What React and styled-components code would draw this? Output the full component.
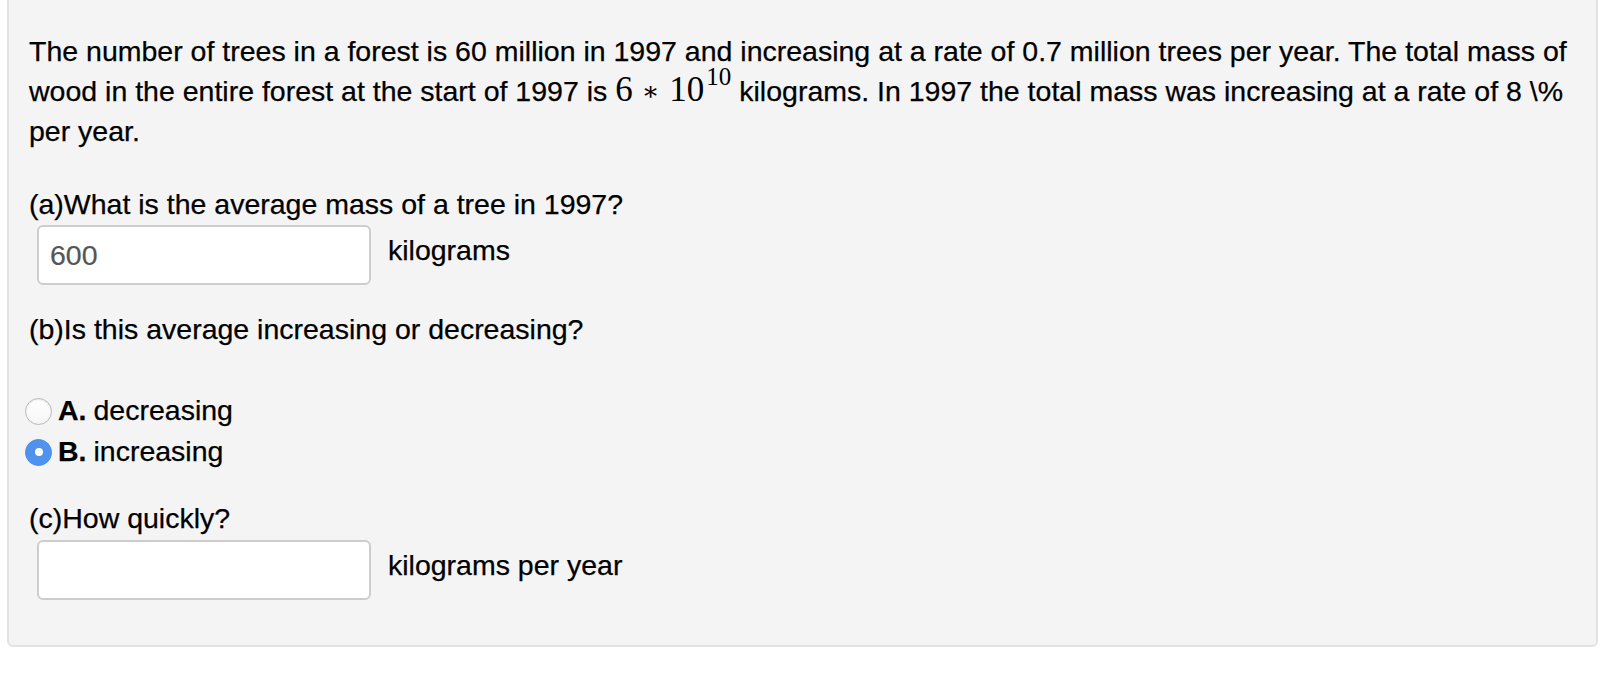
import React from 'react';
import styled, { createGlobalStyle } from 'styled-components';

const GlobalStyle = createGlobalStyle`
  html, body {
    margin: 0;
    padding: 0;
    background: #ffffff;
  }
  body {
    font-family: "Liberation Sans", Arial, Helvetica, sans-serif;
    font-size: 28.5px;
    line-height: 40px;
    color: #000;
    -webkit-text-stroke: 0.25px #000;
  }
`;

const Page = styled.div`
  padding: 0 0 0 7px;
`;

const Panel = styled.div`
  width: 1591px;
  box-sizing: border-box;
  margin-top: -10px;
  padding: 39px 20px 45px 20px;
  background: #f4f4f4;
  border: 2px solid #e2e2e2;
  border-radius: 6px;
`;

const Statement = styled.p`
  margin: 0;
`;

const Math = styled.span`
  font-family: "Liberation Serif", "DejaVu Serif", "Times New Roman", serif;
  font-size: 35px;
  line-height: 0;
  white-space: nowrap;
  -webkit-text-stroke: 0;
`;

const Op = styled.span`
  font-family: "DejaVu Serif", "Liberation Serif", serif;
  font-size: 26px;
  margin: 0 10px 0 9px;
  position: relative;
  top: -1px;
`;

const Sup = styled.sup`
  font-size: 25px;
  line-height: 0;
  vertical-align: 16px;
  margin-left: 2px;
`;

const Question = styled.div`
  margin-top: ${(p) => p.$gap}px;
`;

const AnswerRow = styled.div`
  display: flex;
  align-items: flex-start;
  margin-top: ${(p) => p.$gap}px;
`;

const Field = styled.input`
  box-sizing: border-box;
  width: 334px;
  height: 60px;
  margin: 0 0 0 8px;
  padding: 0 11px;
  border: 2px solid #cdcdcd;
  border-radius: 6px;
  background: #fff;
  font-family: "Liberation Sans", Arial, Helvetica, sans-serif;
  font-size: 28.5px;
  color: #555;
  -webkit-text-stroke: 0.2px #555;
  outline: none;
`;

const Unit = styled.span`
  margin: 5px 0 0 17px;
`;

const Choices = styled.div`
  display: flex;
  flex-direction: column;
  gap: 1px;
  margin-top: 41px;
`;

const Choice = styled.label`
  display: flex;
  align-items: center;
  gap: 6px;
  height: 40px;
  margin-left: -4px;
`;

const RadioDot = styled.span`
  box-sizing: border-box;
  width: 27px;
  height: 27px;
  margin-top: 2px;
  border-radius: 50%;
  display: flex;
  align-items: center;
  justify-content: center;
  background: ${(p) => (p.$checked ? '#4f93ee' : 'linear-gradient(#ffffff, #f6f6f6)')};
  border: ${(p) => (p.$checked ? '1px solid #4a8de8' : '1.5px solid #b9b9b9')};
  box-shadow: ${(p) => (p.$checked ? 'none' : 'inset 0 1px 2px rgba(0,0,0,0.1)')};

  &::after {
    content: '';
    display: ${(p) => (p.$checked ? 'block' : 'none')};
    width: 8px;
    height: 8px;
    border-radius: 50%;
    background: #fff;
  }
`;

const Letter = styled.b`
  font-weight: 700;
  margin-right: 7px;
`;

const choices = [
  { letter: 'A.', text: 'decreasing', checked: false },
  { letter: 'B.', text: 'increasing', checked: true },
];

export default function App() {
  return (
    <>
      <GlobalStyle />
      <Page>
        <Panel>
          <Statement>
            The number of trees in a forest is 60 million in 1997 and increasing at a rate of 0.7 million trees per
            year. The total mass of wood in the entire forest at the start of 1997 is{' '}
            <Math>
              6<Op>∗</Op>10<Sup>10</Sup>
            </Math>{' '}
            kilograms. In 1997 the total mass was increasing at a rate of 8 \% per year.
          </Statement>

          <Question $gap={33}>(a)What is the average mass of a tree in 1997?</Question>
          <AnswerRow $gap={1}>
            <Field type="text" defaultValue="600" />
            <Unit>kilograms</Unit>
          </AnswerRow>

          <Question $gap={24}>(b)Is this average increasing or decreasing?</Question>
          <Choices>
            {choices.map((c) => (
              <Choice key={c.letter}>
                <RadioDot $checked={c.checked} />
                <span>
                  <Letter>{c.letter}</Letter>
                  {c.text}
                </span>
              </Choice>
            ))}
          </Choices>

          <Question $gap={27}>(c)How quickly?</Question>
          <AnswerRow $gap={2}>
            <Field type="text" defaultValue="" />
            <Unit>kilograms per year</Unit>
          </AnswerRow>
        </Panel>
      </Page>
    </>
  );
}
